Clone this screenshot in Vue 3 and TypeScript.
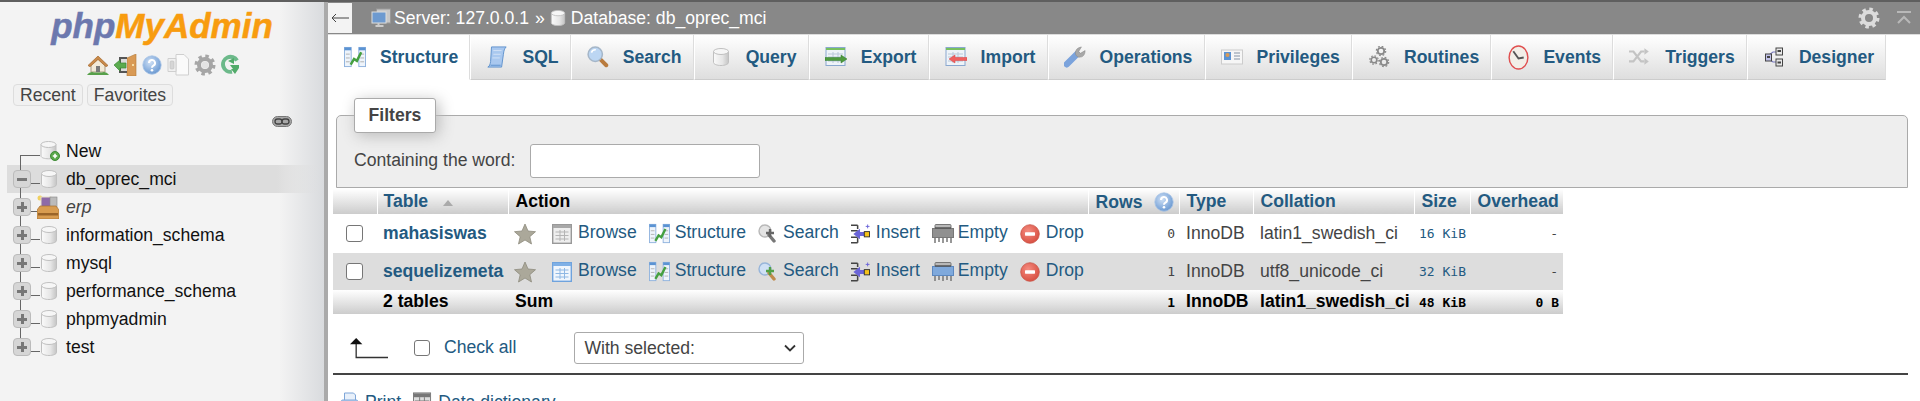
<script setup lang="ts">
const tabs = [
  { label: 'Structure', icon: 'structure', active: true },
  { label: 'SQL', icon: 'sql' },
  { label: 'Search', icon: 'search' },
  { label: 'Query', icon: 'db' },
  { label: 'Export', icon: 'export' },
  { label: 'Import', icon: 'import' },
  { label: 'Operations', icon: 'wrench' },
  { label: 'Privileges', icon: 'card' },
  { label: 'Routines', icon: 'gears' },
  { label: 'Events', icon: 'clock' },
  { label: 'Triggers', icon: 'trigger' },
  { label: 'Designer', icon: 'designer' },
]
const navIcons = [
  { id: 'home', w: 22 },
  { id: 'door', w: 23 },
  { id: 'help', w: 20 },
  { id: 'docs', w: 22 },
  { id: 'gear', w: 22 },
  { id: 'reload', w: 19 },
]
const databases = [
  { name: 'New', icon: 'dbnew', kind: 'new' },
  { name: 'db_oprec_mci', icon: 'db', kind: 'open' },
  { name: 'erp', icon: 'box', kind: 'erp' },
  { name: 'information_schema', icon: 'db', kind: '' },
  { name: 'mysql', icon: 'db', kind: '' },
  { name: 'performance_schema', icon: 'db', kind: '' },
  { name: 'phpmyadmin', icon: 'db', kind: '' },
  { name: 'test', icon: 'db', kind: '' },
]
const tables = [
  { name: 'mahasiswas', rows: '0', coll: 'latin1_swedish_ci', size: '16 KiB', browse: 'browsegrey', search: 'lensgrey', empty: 'emptygrey' },
  { name: 'sequelizemeta', rows: '1', coll: 'utf8_unicode_ci', size: '32 KiB', browse: 'browse', search: 'lens', empty: 'empty' },
]
const actions = (t: (typeof tables)[number]) => [
  { label: 'Browse', icon: t.browse },
  { label: 'Structure', icon: 'structure' },
  { label: 'Search', icon: t.search },
  { label: 'Insert', icon: 'insert' },
  { label: 'Empty', icon: t.empty },
  { label: 'Drop', icon: 'drop' },
]
</script>

<template>
  <svg class="sprite" aria-hidden="true">
    <defs>
      <linearGradient id="gdb" x1="0" x2="1" y1="0" y2="0">
        <stop offset="0" stop-color="#fafafa" /><stop offset="0.6" stop-color="#e6e6e6" /><stop offset="1" stop-color="#c4c4c4" />
      </linearGradient>
      <radialGradient id="ghelp" cx="0.4" cy="0.35" r="0.75">
        <stop offset="0" stop-color="#cfe0f5" /><stop offset="0.7" stop-color="#7fa8da" /><stop offset="1" stop-color="#6290c8" />
      </radialGradient>
      <radialGradient id="gdrop" cx="0.4" cy="0.35" r="0.75">
        <stop offset="0" stop-color="#f58c80" /><stop offset="1" stop-color="#d4483a" />
      </radialGradient>
    </defs>
    <symbol id="db" viewBox="0 0 18 18">
      <path d="M1.5 3.5v11c0 1.6 3.4 3 7.5 3s7.500-1.400 7.500-3v-11z" fill="url(#gdb)" stroke="#c0c0c0" />
      <ellipse cx="9" cy="3.500" rx="7.500" ry="3" fill="#f6f6f6" stroke="#c0c0c0" />
    </symbol>
    <symbol id="dbnew" viewBox="0 0 20 20">
      <path d="M1 3.500v11.500c0 1.600 3.400 2.800 7.500 2.800s7.500-1.200 7.500-2.800V3.500z" fill="url(#gdb)" stroke="#c0c0c0" />
      <ellipse cx="8.500" cy="3.500" rx="7.500" ry="3" fill="#f6f6f6" stroke="#c0c0c0" />
      <circle cx="15" cy="15" r="4.500" fill="#5aa84a" stroke="#3f8a36" />
      <path d="M12.800 15h4.400M15 12.800v4.400" stroke="#fff" stroke-width="1.600" />
    </symbol>
    <symbol id="home" viewBox="0 0 22 22">
      <path d="M4 11v7h14v-7l-7-6z" fill="#f2ead8" stroke="#a89a80" />
      <path d="M1 11.500L11 2l10 9.500-2 1.200L11 5.500 3 12.700z" fill="#c98a4a" stroke="#a5682c" stroke-width="0.700" />
      <rect x="9" y="12" width="4" height="6" fill="#7a7a7a" />
      <path d="M0 21c2-3.500 6-3.500 7-2.500h8c1-1 5-1 7 2.500z" fill="#58a04a" />
    </symbol>
    <symbol id="door" viewBox="0 0 23 22">
      <path d="M13 4l9-4v22h-9z" fill="#d99a55" stroke="#b27a3a" stroke-width="0.600" />
      <path d="M5 3h8v16H5z" fill="#555" /><path d="M7 5h6v12H7z" fill="#dcdcdc" />
      <path d="M0 11l6-5v3h6v5H6v3z" fill="#5bab4f" stroke="#3b8a36" stroke-width="0.700" />
      <circle cx="19" cy="11" r="1" fill="#fff3c0" />
    </symbol>
    <symbol id="help" viewBox="0 0 20 20">
      <circle cx="10" cy="10" r="9.200" fill="url(#ghelp)" stroke="#a8c4e6" stroke-width="0.800" />
      <path d="M7 8a3 3 0 1 1 4.400 2.600c-1 .6-1.400 1-1.400 2.100" fill="none" stroke="#fff" stroke-width="2" />
      <circle cx="10" cy="15.200" r="1.300" fill="#fff" />
    </symbol>
    <symbol id="docs" viewBox="0 0 22 22">
      <path d="M9 .5h8l4.500 4.500v16H9z" fill="#fafafa" stroke="#cfcfcf" />
      <path d="M1 4.500h8v13H1z" fill="#f0f0f0" stroke="#cfcfcf" />
      <rect x="3" y="7" width="4" height="8" rx="1" fill="#d6d6d6" stroke="#bbb" stroke-width="0.500" />
    </symbol>
    <symbol id="gear" viewBox="0 0 22 22">
      <circle cx="11" cy="11" r="8.500" fill="none" stroke="#a6a6a6" stroke-width="4" stroke-dasharray="3.340 3.340" />
      <circle cx="11" cy="11" r="6" fill="none" stroke="#a6a6a6" stroke-width="4" />
      <circle cx="11" cy="11" r="3.500" fill="#e4e4e4" />
    </symbol>
    <symbol id="gearw" viewBox="0 0 22 22">
      <circle cx="11" cy="11" r="8.500" fill="none" stroke="#dcdcdc" stroke-width="4" stroke-dasharray="3.340 3.340" />
      <circle cx="11" cy="11" r="6" fill="none" stroke="#dcdcdc" stroke-width="4" />
      <circle cx="11" cy="11" r="3" fill="#8a8a8a" />
    </symbol>
    <symbol id="reload" viewBox="0 0 19 22">
      <path d="M16 6.500A7.500 7.500 0 1 0 11 17.700" fill="none" stroke="#6cb98a" stroke-width="4" />
      <path d="M9 11h9v3l-4 6-4-5h2z" fill="#52ab6a" />
      <path d="M7 7l6-3v6z" fill="#52ab6a" />
    </symbol>
    <symbol id="link" viewBox="0 0 20 11">
      <rect x="0.500" y="0.500" width="19" height="10" rx="5" fill="#a8a8a8" stroke="#777" />
      <rect x="3" y="3" width="7" height="5" rx="2.500" fill="none" stroke="#444" stroke-width="1.300" />
      <rect x="10" y="3" width="7" height="5" rx="2.500" fill="none" stroke="#444" stroke-width="1.300" />
    </symbol>
    <symbol id="box" viewBox="0 0 22 24">
      <circle cx="3" cy="3" r="2.500" fill="#f0d060" />
      <rect x="4" y="2" width="10" height="11" fill="#8d6aa8" stroke="#e8e0c8" />
      <rect x="13" y="2" width="7" height="11" fill="#bbb" stroke="#888" stroke-width="0.600" />
      <path d="M3 11h16l3 4v9H0v-9z" fill="#d89c50" stroke="#a87030" stroke-width="0.700" />
      <rect x="1" y="18" width="20" height="2.500" fill="#9a6428" />
    </symbol>
    <symbol id="structure" viewBox="0 0 23 22">
      <rect x="0.500" y="1" width="7" height="20" fill="#eef4fb" stroke="#8fb2dd" />
      <rect x="15.500" y="1" width="7" height="20" fill="#eef4fb" stroke="#8fb2dd" />
      <rect x="0.500" y="1" width="7" height="3" fill="#5b93d3" /><rect x="15.500" y="1" width="7" height="3" fill="#5b93d3" />
      <path d="M2 8h4M2 12h4M2 16h4M17 8h4M17 12h4M17 16h4" stroke="#b0b0b0" />
      <path d="M7 19l3.500-6 3 2L18 6" fill="none" stroke="#45a040" stroke-width="2.600" />
    </symbol>
    <symbol id="sql" viewBox="0 0 22 24">
      <path d="M5 1h16c-2 2-2.500 4-3 8l-2 14H1c2-1 2.500-3 3-6z" fill="#a9c8ef" stroke="#5b8fcc" />
      <path d="M4 21h11" stroke="#5b8fcc" /><path d="M7 5h9M7 9h8M6 13h8" stroke="#d5e4f6" />
    </symbol>
    <symbol id="search" viewBox="0 0 20 20">
      <path d="M11.500 11.500l6 6" stroke="#b97b3d" stroke-width="3.600" stroke-linecap="round" />
      <circle cx="7.500" cy="7.500" r="6.500" fill="#bcd6f3" stroke="#a5b6c8" stroke-width="1.400" />
      <path d="M4 6a4 4 0 0 1 4-2.500" fill="none" stroke="#fff" stroke-width="1.400" />
    </symbol>
    <symbol id="export" viewBox="0 0 22 20">
      <rect x="1" y="0.500" width="19" height="18" fill="#eef3f8" stroke="#8aa8cf" />
      <rect x="1" y="1" width="19" height="2" fill="#78c060" />
      <path d="M3 7h15M3 10h15M3 14h15M8 5v11M13 5v11" stroke="#b9c8d8" />
      <path d="M0 10.500h16v-2.500l6 4-6 4v-2.500H0z" fill="#4e9a3e" stroke="#2e7a28" stroke-width="0.500" />
    </symbol>
    <symbol id="import" viewBox="0 0 22 20">
      <rect x="1" y="0.500" width="19" height="18" fill="#eef3f8" stroke="#8aa8cf" />
      <rect x="1" y="1" width="19" height="2" fill="#78c060" />
      <path d="M3 7h15M3 10h15M3 14h15M8 5v11M13 5v11" stroke="#b9c8d8" />
      <path d="M22 10.500H10v-2.500l-6 4 6 4v-2.500h12z" fill="#f0605f" stroke="#d84040" stroke-width="0.500" />
    </symbol>
    <symbol id="wrench" viewBox="0 0 24 24">
      <path d="M3 20L14 9" stroke="#7ba3dc" stroke-width="7" stroke-linecap="round" />
      <path d="M13 10a6 6 0 0 1 3-8l3-1-3 5 2 2 5-3c0 4-2 7-5 7-2 .5-3 0-5-2z" fill="#a8a8a8" stroke="#8a8a8a" stroke-width="0.600" />
    </symbol>
    <symbol id="card" viewBox="0 0 22 18">
      <rect x="0.500" y="2" width="21" height="14" fill="#f6f6f6" stroke="#ccc" />
      <rect x="3" y="4" width="7" height="8" fill="#5b93d3" /><circle cx="6.500" cy="7" r="2" fill="#d99a55" />
      <path d="M13 5h6M13 8h6M13 11h6" stroke="#aab4c0" stroke-width="1.400" />
    </symbol>
    <symbol id="gears" viewBox="0 0 20 22">
      <g fill="none" stroke="#8a8a8a">
        <circle cx="12" cy="5" r="3.200" stroke-width="1.800" /><circle cx="12" cy="5" r="4.700" stroke-width="1.200" stroke-dasharray="1.800 1.900" />
        <circle cx="5" cy="14" r="2.800" stroke-width="1.600" /><circle cx="5" cy="14" r="4.200" stroke-width="1.200" stroke-dasharray="1.600 1.700" />
        <circle cx="15" cy="16" r="3.200" stroke-width="1.800" /><circle cx="15" cy="16" r="4.700" stroke-width="1.200" stroke-dasharray="1.800 1.900" />
      </g>
    </symbol>
    <symbol id="clock" viewBox="0 0 20 24">
      <ellipse cx="10" cy="12" rx="9" ry="11" fill="#f2efe8" stroke="#e05050" stroke-width="1.400" />
      <path d="M5 6l5 7 5-1" fill="none" stroke="#555" stroke-width="1.800" />
    </symbol>
    <symbol id="trigger" viewBox="0 0 20 16">
      <path d="M0 3h4l7 9h3M0 12h4l7-9h3" fill="none" stroke="#c4c4c4" stroke-width="2" />
      <path d="M14 0l4 3-4 3zM14 9l4 3-4 3z" fill="#c4c4c4" />
    </symbol>
    <symbol id="designer" viewBox="0 0 18 22">
      <path d="M1 11l7-5h10M1 11l7 5h10" fill="none" stroke="#7a7ac0" stroke-width="1.200" />
      <rect x="0.500" y="8" width="6" height="7" fill="#c0c0e8" stroke="#444" />
      <rect x="11" y="2" width="6.500" height="7" fill="#e8e8e8" stroke="#444" /><rect x="11" y="13" width="6.500" height="7" fill="#e8e8e8" stroke="#444" />
      <rect x="12.500" y="4" width="3.500" height="2" fill="#444" /><rect x="12.500" y="15.500" width="3.500" height="2" fill="#444" /><rect x="2" y="10" width="3" height="2" fill="#444" />
    </symbol>
    <symbol id="star" viewBox="0 0 22 22">
      <path d="M11 1l3 7 7.500.7-5.700 5 1.700 7.300L11 17l-6.500 4 1.700-7.300-5.700-5L8 8z" fill="#aba89a" stroke="#8e8b7d" stroke-width="0.800" />
    </symbol>
    <symbol id="browsegrey" viewBox="0 0 20 20">
      <rect x="0.700" y="0.700" width="18.600" height="18.600" fill="#eee" stroke="#999" stroke-width="1.400" />
      <rect x="1" y="1" width="18" height="3" fill="#a8a8a8" />
      <path d="M3.500 8h13M3.500 11.500h13M3.500 15h13M8 6v11M12.500 6v11" stroke="#b5b5b5" />
    </symbol>
    <symbol id="browse" viewBox="0 0 20 20">
      <rect x="0.700" y="0.700" width="18.600" height="18.600" fill="#f0f6fd" stroke="#6fa3dd" stroke-width="1.400" />
      <rect x="1" y="1" width="18" height="3" fill="#7fb0e6" />
      <path d="M3.500 8h13M3.500 11.500h13M3.500 15h13M8 6v11M12.500 6v11" stroke="#8fb8e4" />
    </symbol>
    <symbol id="lensgrey" viewBox="0 0 18 20">
      <circle cx="7" cy="7" r="6" fill="#e4e4e4" stroke="#b8b8b8" stroke-width="1.400" />
      <path d="M11 11l5 6" stroke="#777" stroke-width="3.400" stroke-linecap="round" />
      <path d="M8 9h8M12 5v8" stroke="#666" stroke-width="2.400" />
    </symbol>
    <symbol id="lens" viewBox="0 0 18 20">
      <circle cx="7" cy="7" r="6" fill="#cfe0f5" stroke="#97b5da" stroke-width="1.400" />
      <path d="M11 11l5 6" stroke="#c08a4a" stroke-width="3.400" stroke-linecap="round" />
      <path d="M8 9h8M12 5v8" stroke="#52a046" stroke-width="2.400" />
    </symbol>
    <symbol id="insert" viewBox="0 0 20 20">
      <path d="M0 .8h7M7 .8v4M0 6.500h7M7 6.500v3M7 14v3M0 13.500h7M0 19.200h7M7 15v4.200" fill="none" stroke="#444" stroke-width="1.600" />
      <path d="M2.500 10l7-5.500v3.500h5v4h-5v3.500z" fill="#6a64d8" />
      <rect x="14" y="7.500" width="5.500" height="5.500" fill="#f5c21a" stroke="#333" />
      <path d="M15.500 2h4M17.500 0v4" stroke="#6a64d8" />
    </symbol>
    <symbol id="emptygrey" viewBox="0 0 22 20">
      <rect x="3" y="0.500" width="16" height="7" rx="1" fill="#b8b8b8" stroke="#777" />
      <rect x="0.500" y="4.500" width="21" height="9" fill="#909090" stroke="#777" />
      <path d="M3 14v5M7 14v4M11 14v5M15 14v4M19 14v5" stroke="#777" stroke-width="1.500" />
      <path d="M3 4h16" stroke="#555" stroke-width="1.500" />
    </symbol>
    <symbol id="empty" viewBox="0 0 22 20">
      <rect x="3" y="0.500" width="16" height="7" rx="1" fill="#b8b8b8" stroke="#777" />
      <rect x="0.500" y="4.500" width="21" height="9" fill="#7fa9dc" stroke="#5c88c0" />
      <path d="M3 14v5M7 14v4M11 14v5M15 14v4M19 14v5" stroke="#777" stroke-width="1.500" />
      <path d="M3 4h16" stroke="#555" stroke-width="1.500" />
    </symbol>
    <symbol id="drop" viewBox="0 0 20 20">
      <circle cx="10" cy="10" r="9.300" fill="url(#gdrop)" stroke="#c9574a" stroke-width="0.800" />
      <rect x="5" y="8.300" width="10" height="3.400" rx="0.600" fill="#fff" />
    </symbol>
    <symbol id="print" viewBox="0 0 18 18">
      <path d="M4 1h9l2 2v6H4z" fill="#e8f0fa" stroke="#7ea6d8" />
      <rect x="1" y="8" width="16" height="8" rx="1" fill="#b9d0ee" stroke="#7ea6d8" />
    </symbol>
    <symbol id="dict" viewBox="0 0 20 18">
      <rect x="0.500" y="0.500" width="18" height="17" fill="#ddd" stroke="#777" />
      <rect x="1" y="1" width="17" height="4" fill="#777" />
      <path d="M2 9h15M2 13h15M7 5v12M12 5v12" stroke="#777" />
    </symbol>
  </svg>

  <div class="page">
    <aside class="side">
      <div class="logo"><span class="php">php</span><span class="my">MyAdmin</span></div>
      <div class="navicons">
        <svg v-for="n in navIcons" :key="n.id" class="navicon" :style="{ width: n.w + 'px' }"><use :href="'#' + n.id" /></svg>
      </div>
      <div class="recent">
        <span class="rbtn">Recent</span>
        <span class="rbtn">Favorites</span>
      </div>
      <div class="linkrow"><svg class="linkic"><use href="#link" /></svg></div>
      <ul class="tree">
        <li v-for="(d, i) in databases" :key="d.name" class="node" :class="[d.kind, { last: i === databases.length - 1 }]">
          <span v-if="d.kind === 'new'" class="exp none"></span>
          <span v-else class="exp" :class="{ minus: d.kind === 'open' }"></span>
          <svg class="dbic" :class="{ boxic: d.kind === 'erp', newic: d.kind === 'new' }"><use :href="'#' + d.icon" /></svg>
          <span class="dbname">{{ d.name }}</span>
        </li>
      </ul>
    </aside>
    <div class="split"></div>
    <main class="main">
      <div class="topbar">
        <span class="back">
          <svg viewBox="0 0 18 10"><path d="M18 5H1M5 1L1 5l4 4" fill="none" stroke="#444" stroke-width="1" /></svg>
        </span>
        <svg class="srvic" viewBox="0 0 20 20">
          <rect x="5" y="1" width="14" height="14" fill="#c8c8c8" stroke="#999" />
          <rect x="0.500" y="4" width="14" height="11" fill="#6d9ad0" stroke="#ddd" />
          <path d="M4 18h8M7 15v3" stroke="#ccc" stroke-width="2" />
        </svg>
        <span class="crumb">Server: 127.0.0.1</span>
        <span class="crumb sep">»</span>
        <svg class="crumbdb"><use href="#db" /></svg>
        <span class="crumb">Database: db_oprec_mci</span>
        <span class="grow"></span>
        <svg class="tgear"><use href="#gearw" /></svg>
        <svg class="tup" viewBox="0 0 16 14"><path d="M1 1h14M2 12l6-6 6 6" fill="none" stroke="#b8b8b8" stroke-width="2" /></svg>
      </div>
      <nav class="tabs">
        <a v-for="t in tabs" :key="t.label" class="tab" :class="{ active: t.active }">
          <span class="tabic"><svg :class="'tab-' + t.icon"><use :href="'#' + t.icon" /></svg></span>
          <span>{{ t.label }}</span>
        </a>
      </nav>
      <section class="filters">
        <div class="legend">Filters</div>
        <label class="flabel">Containing the word:</label>
        <input class="finput" type="text" />
      </section>
      <table class="dbt">
        <colgroup>
          <col style="width: 44px" /><col style="width: 131px" /><col style="width: 580px" /><col style="width: 91px" />
          <col style="width: 74px" /><col style="width: 161px" /><col style="width: 56px" /><col style="width: 93px" />
        </colgroup>
        <thead>
          <tr>
            <th></th>
            <th class="lnk">Table <span class="sort"></span></th>
            <th>Action</th>
            <th class="lnk">Rows <svg class="thhelp"><use href="#help" /></svg></th>
            <th class="lnk">Type</th>
            <th class="lnk">Collation</th>
            <th class="lnk">Size</th>
            <th class="lnk">Overhead</th>
          </tr>
        </thead>
        <tbody>
          <tr v-for="t in tables" :key="t.name">
            <td class="cc"><input type="checkbox" class="chk" /></td>
            <td class="name">{{ t.name }}</td>
            <td class="acts">
              <div class="actrow">
                <svg class="star"><use href="#star" /></svg>
                <span v-for="a in actions(t)" :key="a.label" class="act">
                  <svg :class="'a-' + a.label.toLowerCase()"><use :href="'#' + a.icon" /></svg><span class="actlabel">{{ a.label }}</span>
                </span>
              </div>
            </td>
            <td class="num">{{ t.rows }}</td>
            <td>InnoDB</td>
            <td>{{ t.coll }}</td>
            <td class="size">{{ t.size }}</td>
            <td class="num dash">-</td>
          </tr>
        </tbody>
        <tfoot>
          <tr>
            <th></th>
            <th>2 tables</th>
            <th>Sum</th>
            <th class="num">1</th>
            <th>InnoDB</th>
            <th>latin1_swedish_ci</th>
            <th class="size tot">48 KiB</th>
            <th class="num tot2">0 B</th>
          </tr>
        </tfoot>
      </table>
      <div class="bulk">
        <svg class="arrow" viewBox="0 0 40 22">
          <path d="M6.500 6v15H40" fill="none" stroke="#333" stroke-width="1.400" />
          <path d="M0 7l6.500-6.500L13 7z" fill="#111" />
        </svg>
        <input type="checkbox" class="chk bulkchk" />
        <span class="checkall">Check all</span>
        <div class="selwrap">
          <select class="sel"><option>With selected:</option></select>
          <svg class="chev" viewBox="0 0 12 8"><path d="M1 1.500l5 5 5-5" fill="none" stroke="#333" stroke-width="1.800" /></svg>
        </div>
      </div>
      <hr class="rule" />
      <div class="foot">
        <svg class="fic"><use href="#print" /></svg><span class="flink printlink">Print</span>
        <svg class="fic"><use href="#dict" /></svg><span class="flink">Data dictionary</span>
      </div>
    </main>
  </div>
</template>

<style>
html,
body {
  margin: 0;
  height: 401px;
  overflow: hidden;
  background: #fff;
}
</style>

<style scoped>
.sprite {
  position: absolute;
  width: 0;
  height: 0;
}
.page {
  display: flex;
  height: 399px;
  border-top: 2px solid #5f5f5f;
  overflow: hidden;
  font: 17.6px "Liberation Sans", Arial, sans-serif;
  color: #444;
}
.side {
  width: 324px;
  flex: none;
  box-sizing: border-box;
  background: linear-gradient(to right, #f3f3f3 0, #f3f3f3 280px, #d9dbde 324px);
}
.logo {
  height: 44px;
  padding-top: 6px;
  box-sizing: border-box;
  text-align: center;
  font: italic bold 35px/36px "Liberation Sans", sans-serif;
  -webkit-text-stroke: 0.5px currentColor;
}
.php { color: #6c78ae; }
.my { color: #f89c0f; }
.navicons {
  display: flex;
  height: 22px;
  margin-top: 8px;
  padding-left: 87px;
  gap: 5px;
}
.navicon { height: 22px; flex: none; }
.recent {
  display: flex;
  gap: 4px;
  margin-top: 8px;
  padding-left: 13px;
}
.rbtn {
  display: block;
  height: 22px;
  line-height: 21px;
  padding: 0 6px;
  border: 1px solid #ddd;
  border-radius: 4px;
  box-sizing: border-box;
  background: #f1f1f1;
  color: #444;
}
.linkrow {
  height: 31px;
  display: flex;
  justify-content: flex-end;
  padding: 10px 32px 0 0;
  box-sizing: border-box;
}
.linkic { width: 20px; height: 11px; }
.tree {
  list-style: none;
  margin: 0;
  padding: 0;
}
.node {
  position: relative;
  display: flex;
  align-items: center;
  height: 28px;
  padding-left: 6px;
  margin-left: 7px;
  color: #111;
}
.node::before {
  content: "";
  position: absolute;
  left: 13px;
  top: 0;
  bottom: 0;
  border-left: 1px solid #666;
}
.node::after {
  content: "";
  position: absolute;
  left: 13px;
  top: 18px;
  width: 20px;
  border-top: 1px solid #666;
}
.node.new::before { top: 18px; }
.node.last::before { bottom: 14px; }
.node.open {
  background: linear-gradient(to right, #ddd 0, #ddd 270px, rgba(221, 221, 221, 0) 312px);
}
.exp {
  position: relative;
  z-index: 1;
  width: 18px;
  height: 18px;
  flex: none;
  box-sizing: border-box;
  border: 1px solid #bbb;
  border-radius: 4px;
  background: #d6d6d6;
  margin-right: 9px;
}
.exp.none {
  border: 0;
  background: none;
}
.exp::before {
  content: "";
  position: absolute;
  left: 3px;
  right: 3px;
  top: 6.5px;
  height: 3px;
  background: #777;
}
.exp.none::before { display: none; }
.exp:not(.minus):not(.none)::after {
  content: "";
  position: absolute;
  top: 3px;
  bottom: 3px;
  left: 6.5px;
  width: 3px;
  background: #777;
}
.dbic {
  position: relative;
  z-index: 1;
  width: 18px;
  height: 18px;
  flex: none;
  margin-right: 8px;
}
.dbic.boxic {
  width: 22px;
  height: 24px;
  margin: 0 7px 0 -3px;
}
.dbic.newic {
  width: 20px;
  height: 20px;
  margin-right: 6px;
}
.erp .dbname {
  font-style: italic;
  color: #444;
}
.split {
  width: 4px;
  flex: none;
  background: #aaa;
}
.main {
  flex: 1;
  min-width: 0;
}
.topbar {
  display: flex;
  align-items: center;
  height: 33px;
  background: #888;
  color: #fff;
  border-bottom: 1px solid #ddd;
  box-sizing: border-box;
}
.back {
  display: flex;
  align-items: center;
  justify-content: center;
  width: 24px;
  height: 30px;
  background: #f3f3f3;
  margin-right: 19px;
  flex: none;
}
.back svg { width: 18px; height: 10px; }
.srvic { width: 21px; height: 20px; margin-right: 2px; flex: none; }
.crumb { white-space: nowrap; }
.crumb.sep { margin: 0 5px 0 6px; }
.crumbdb { width: 16px; height: 18px; margin-right: 5px; flex: none; }
.grow { flex: 1; }
.tgear { width: 22px; height: 22px; margin-right: 16px; flex: none; }
.tup { width: 16px; height: 14px; margin-right: 8px; flex: none; }
.tabs {
  display: flex;
  height: 45px;
}
.tab {
  display: flex;
  align-items: center;
  box-sizing: border-box;
  padding: 0 11.2px 0 14px;
  background: linear-gradient(#fff, #dedede);
  border-right: 1px solid #ddd;
  border-left: 1px solid #fff;
  border-bottom: 1px solid #ccc;
  font-weight: bold;
  color: #235a81;
  white-space: nowrap;
}
.tab.active {
  background: #fff;
  border-bottom-color: #fff;
}
.tabic {
  display: flex;
  justify-content: center;
  align-items: center;
  width: 24px;
  margin-right: 13px;
}
.tabic svg { width: 22px; height: 22px; }
.tabic svg.tab-db { width: 18px; height: 18px; }
.tabic svg.tab-clock { width: 21px; height: 25px; }
.filters {
  position: relative;
  display: flex;
  align-items: center;
  height: 73px;
  margin: 35px 12px 0 8px;
  padding: 18px 0 0 17px;
  box-sizing: border-box;
  background: #eee;
  border: 1px solid #aaa;
  border-radius: 5px 5px 0 0;
}
.legend {
  position: absolute;
  left: 17px;
  top: -18px;
  box-sizing: border-box;
  width: 82px;
  height: 35px;
  line-height: 33px;
  text-align: center;
  background: #fff;
  border: 1px solid #aaa;
  border-radius: 3px;
  box-shadow: 3px 3px 15px #bbb;
  font-weight: bold;
}
.flabel { margin-right: 15px; }
.finput {
  width: 230px;
  height: 34px;
  box-sizing: border-box;
  border: 1px solid #aaa;
  border-radius: 3px;
  background: #fff;
}
.dbt {
  margin: 1px 0 0 5px;
  width: 1230px;
  table-layout: fixed;
  border-collapse: collapse;
  font-size: 17.6px;
  color: #444;
}
.dbt th {
  height: 25px;
  padding: 0 0 0 7px;
  box-sizing: border-box;
  text-align: left;
  font-weight: bold;
  color: #000;
  background: linear-gradient(#fff, #ccc);
  border-right: 1px solid #fff;
  white-space: nowrap;
  line-height: 1;
}
.dbt th.lnk { color: #235a81; }
.dbt th:nth-child(2) { padding-left: 6px; }
.dbt tbody td {
  padding: 0 0 0 7px;
  white-space: nowrap;
  line-height: 1;
}
.dbt tbody tr:nth-child(1) { height: 39px; }
.dbt tbody tr:nth-child(2) { height: 37px; background: #ddd; }
.dbt tfoot th {
  height: 24px;
  background: linear-gradient(#fff, #ccc);
  border-right: 0;
}
.sort {
  display: inline-block;
  width: 0;
  height: 0;
  margin-left: 10px;
  vertical-align: 1px;
  border: 5px solid transparent;
  border-top: 0;
  border-bottom: 6px solid #aaa;
}
.thhelp {
  width: 20px;
  height: 20px;
  vertical-align: -4px;
  margin-left: 7px;
}
.cc { text-align: left; padding-left: 13px !important; }
.chk {
  appearance: none;
  display: block;
  width: 17px;
  height: 17px;
  margin: 0;
  border: 1.5px solid #767676;
  border-radius: 3px;
  background: #fff;
  box-sizing: border-box;
}
.name {
  font-weight: bold;
  color: #235a81;
  padding-left: 6px !important;
}
.actrow {
  display: flex;
  align-items: center;
  margin-left: -1px;
}
.star {
  width: 22px;
  height: 22px;
  margin-right: 16px;
  flex: none;
}
.act {
  display: flex;
  align-items: center;
  margin-right: 12px;
  color: #235a81;
}
.actlabel { position: relative; top: -1px; }
.act svg {
  width: 20px;
  height: 20px;
  margin-right: 6px;
  flex: none;
}
.act svg.a-structure { width: 21px; height: 21px; margin-right: 5px; }
.act svg.a-search { width: 18px; margin-right: 7px; }
.act svg.a-insert { width: 19px; }
.act svg.a-empty { width: 22px; margin-right: 4px; }
.dbt .num {
  text-align: right;
  padding: 0 4px 0 0;
  font: 13px "DejaVu Sans Mono", monospace;
  color: #444;
}
.dbt .dash { padding-right: 5px; }
.size {
  font: 13px "DejaVu Sans Mono", monospace;
  color: #235a81;
  padding-left: 5px !important;
}
.dbt tfoot .size,
.dbt tfoot .num {
  font: bold 13px "DejaVu Sans Mono", monospace;
  color: #000;
}
.dbt tfoot .tot2 { padding-right: 4px; }
.bulk {
  display: flex;
  align-items: center;
  height: 59px;
  padding: 8px 0 0 22px;
  box-sizing: border-box;
}
.arrow {
  width: 38px;
  height: 22px;
  flex: none;
}
.bulkchk { margin-left: 26px; width: 16px; height: 16px; }
.checkall {
  margin-left: 14px;
  color: #235a81;
}
.selwrap {
  position: relative;
  margin-left: 58px;
  flex: none;
}
.sel {
  appearance: none;
  display: block;
  width: 230px;
  height: 32px;
  padding: 0 9px;
  border: 1px solid #aaa;
  border-radius: 3px;
  background: #fff;
  font: 17.6px "Liberation Sans", sans-serif;
  color: #444;
}
.chev {
  position: absolute;
  right: 8px;
  top: 12px;
  width: 12px;
  height: 8px;
  pointer-events: none;
}
.rule {
  margin: 0 12px 0 5px;
  height: 2px;
  border: 0;
  background: #444;
}
.foot {
  display: flex;
  align-items: flex-start;
  padding: 17px 0 0 12px;
}
.fic {
  width: 19px;
  height: 18px;
  flex: none;
  margin-right: 6px;
}
.flink {
  color: #235a81;
  line-height: 20px;
}
.printlink { margin-right: 12px; }
</style>
